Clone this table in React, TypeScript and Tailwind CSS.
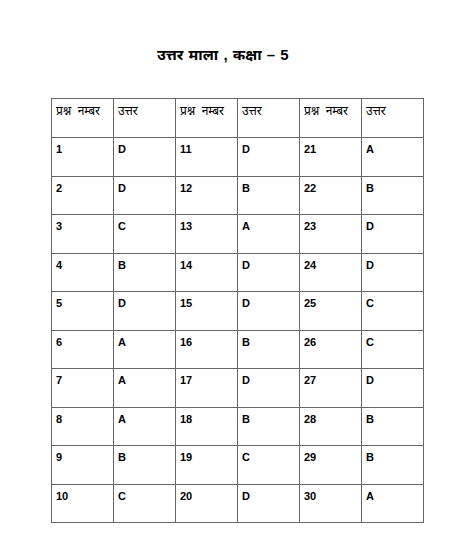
import React from 'react';

const rows: [number, string, number, string, number, string][] = [
  [1, 'D', 11, 'D', 21, 'A'],
  [2, 'D', 12, 'B', 22, 'B'],
  [3, 'C', 13, 'A', 23, 'D'],
  [4, 'B', 14, 'D', 24, 'D'],
  [5, 'D', 15, 'D', 25, 'C'],
  [6, 'A', 16, 'B', 26, 'C'],
  [7, 'A', 17, 'D', 27, 'D'],
  [8, 'A', 18, 'B', 28, 'B'],
  [9, 'B', 19, 'C', 29, 'B'],
  [10, 'C', 20, 'D', 30, 'A'],
];

const headers = ['प्रश्न नम्बर', 'उत्तर', 'प्रश्न नम्बर', 'उत्तर', 'प्रश्न नम्बर', 'उत्तर'];

export default function App() {
  return (
    <div
      className="w-[474px] h-[540px] bg-white text-black"
      style={{ fontFamily: '"Liberation Sans", "Noto Sans", sans-serif' }}
    >
      <div className="pt-[43px] pl-[157px] text-left text-[15px] font-bold leading-6 [word-spacing:1px]">
        उत्तर माला , कक्षा – 5
      </div>
      <table className="mt-[31px] ml-[51px] w-[373px] border-collapse table-fixed">
        <thead>
          <tr>
            {headers.map((h, i) => (
              <th
                key={i}
                className="h-[39px] border border-[#666] px-[4px] pt-[4px] align-top text-left text-[12px] font-normal leading-4 [word-spacing:3px]"
              >
                {h}
              </th>
            ))}
          </tr>
        </thead>
        <tbody>
          {rows.map((r, i) => (
            <tr key={i}>
              {r.map((c, j) => (
                <td
                  key={j}
                  className="h-[38.5px] border border-[#666] px-[4px] pt-[3px] align-top text-[11px] font-bold leading-4"
                >
                  {c}
                </td>
              ))}
            </tr>
          ))}
        </tbody>
      </table>
    </div>
  );
}
